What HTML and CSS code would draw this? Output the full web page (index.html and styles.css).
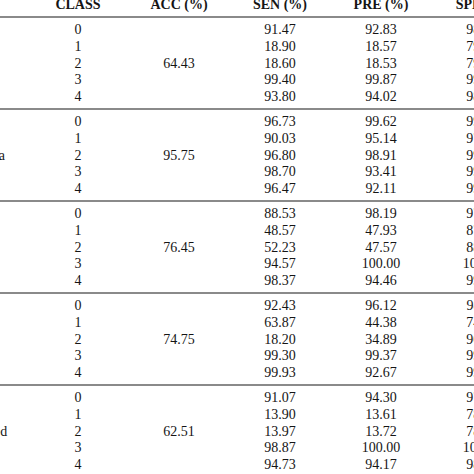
FILE: index.html
```html
<!DOCTYPE html>
<html>
<head>
<meta charset="utf-8">
<link rel="stylesheet" href="styles.css">
</head>
<body>
<div class="table">
  <div class="head">
    <div class="cell"></div>
    <div class="cell">CLASS</div>
    <div class="cell">ACC (%)</div>
    <div class="cell">SEN (%)</div>
    <div class="cell">PRE (%)</div>
    <div class="cell">SPE (%)</div>
  </div>

  <div class="group">
    <div class="mid">CNN</div>
    <div class="stack"><div>0</div><div>1</div><div>2</div><div>3</div><div>4</div></div>
    <div class="mid">64.43</div>
    <div class="stack"><div>91.47</div><div>18.90</div><div>18.60</div><div>99.40</div><div>93.80</div></div>
    <div class="stack"><div>92.83</div><div>18.57</div><div>18.53</div><div>99.87</div><div>94.02</div></div>
    <div class="stack"><div>98.21</div><div>79.72</div><div>79.65</div><div>99.85</div><div>98.45</div></div>
  </div>

  <div class="group">
    <div class="mid">BiMamba</div>
    <div class="stack"><div>0</div><div>1</div><div>2</div><div>3</div><div>4</div></div>
    <div class="mid">95.75</div>
    <div class="stack"><div>96.73</div><div>90.03</div><div>96.80</div><div>98.70</div><div>96.47</div></div>
    <div class="stack"><div>99.62</div><div>95.14</div><div>98.91</div><div>93.41</div><div>92.11</div></div>
    <div class="stack"><div>99.18</div><div>97.52</div><div>99.20</div><div>99.67</div><div>99.12</div></div>
  </div>

  <div class="group">
    <div class="mid">LSTM</div>
    <div class="stack"><div>0</div><div>1</div><div>2</div><div>3</div><div>4</div></div>
    <div class="mid">76.45</div>
    <div class="stack"><div>88.53</div><div>48.57</div><div>52.23</div><div>94.57</div><div>98.37</div></div>
    <div class="stack"><div>98.19</div><div>47.93</div><div>47.57</div><div>100.00</div><div>94.46</div></div>
    <div class="stack"><div>97.13</div><div>87.14</div><div>88.06</div><div>100.00</div><div>99.59</div></div>
  </div>

  <div class="group">
    <div class="mid">GRU</div>
    <div class="stack"><div>0</div><div>1</div><div>2</div><div>3</div><div>4</div></div>
    <div class="mid">74.75</div>
    <div class="stack"><div>92.43</div><div>63.87</div><div>18.20</div><div>99.30</div><div>99.93</div></div>
    <div class="stack"><div>96.12</div><div>44.38</div><div>34.89</div><div>99.37</div><div>92.67</div></div>
    <div class="stack"><div>98.11</div><div>74.56</div><div>96.45</div><div>99.83</div><div>99.98</div></div>
  </div>

  <div class="group">
    <div class="mid">Fine-tuned</div>
    <div class="stack"><div>0</div><div>1</div><div>2</div><div>3</div><div>4</div></div>
    <div class="mid">62.51</div>
    <div class="stack"><div>91.07</div><div>13.90</div><div>13.97</div><div>98.87</div><div>94.73</div></div>
    <div class="stack"><div>94.30</div><div>13.61</div><div>13.72</div><div>100.00</div><div>94.17</div></div>
    <div class="stack"><div>97.77</div><div>78.48</div><div>78.49</div><div>100.00</div><div>98.67</div></div>
  </div>
</div>
</body>
</html>
```

FILE: styles.css
```css
html, body {
  margin: 0;
  padding: 0;
  width: 474px;
  height: 474px;
  overflow: hidden;
  background: #ffffff;
}

.table {
  margin-left: -73.5px;
  width: 606px;
  font-family: "Liberation Serif", "Times New Roman", serif;
  font-size: 14px;
  color: #151515;
}

.head {
  display: grid;
  grid-template-columns: repeat(6, 101px);
  margin-top: -3px;
  height: 19px;
  line-height: 16px;
  font-weight: bold;
  border-bottom: 2px solid #8a8a8a;
  text-align: center;
  white-space: nowrap;
}

.group {
  display: grid;
  grid-template-columns: repeat(6, 101px);
  padding: 4px 0 2px;
  border-bottom: 2px solid #8a8a8a;
  text-align: center;
  line-height: 16.8px;
  white-space: nowrap;
}

.mid {
  align-self: center;
}

.stack > div {
  height: 16.8px;
}
```
